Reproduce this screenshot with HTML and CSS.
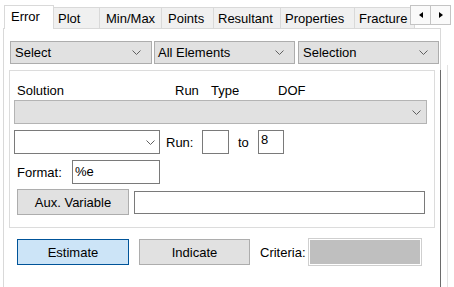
FILE: index.html
```html
<!DOCTYPE html>
<html>
<head>
<meta charset="utf-8">
<link rel="stylesheet" href="styles.css">
</head>
<body>
<div class="window">
  <div class="tabstrip">
    <div class="tab sel t-error">Error</div>
    <div class="tab t-plot">Plot</div>
    <div class="tab t-minmax">Min/Max</div>
    <div class="tab t-points">Points</div>
    <div class="tab t-result">Resultant</div>
    <div class="tab t-props">Properties</div>
    <div class="tab t-frac">Fracture</div>
    <div class="spin">
      <div class="spin-btn"><span class="tri tri-left"></span></div>
      <div class="spin-btn"><span class="tri tri-right"></span></div>
    </div>
  </div>
  <div class="body">
    <div class="panel">
      <div class="row1">
        <div class="dd w1"><span>Select</span><svg class="chev" width="9" height="5" viewBox="0 0 9 5"><polyline points="0.5,0.5 4.5,4.5 8.5,0.5"/></svg></div>
        <div class="dd w2"><span>All Elements</span><svg class="chev" width="9" height="5" viewBox="0 0 9 5"><polyline points="0.5,0.5 4.5,4.5 8.5,0.5"/></svg></div>
        <div class="dd w3"><span>Selection</span><svg class="chev" width="9" height="5" viewBox="0 0 9 5"><polyline points="0.5,0.5 4.5,4.5 8.5,0.5"/></svg></div>
      </div>
      <div class="group">
        <div class="labels">
          <span class="l-sol">Solution</span>
          <span class="l-run">Run</span>
          <span class="l-type">Type</span>
          <span>DOF</span>
        </div>
        <div class="solbar"><svg class="chev" width="9" height="5" viewBox="0 0 9 5"><polyline points="0.5,0.5 4.5,4.5 8.5,0.5"/></svg></div>
        <div class="row3">
          <div class="combo"><svg class="chev" width="9" height="5" viewBox="0 0 9 5"><polyline points="0.5,0.5 4.5,4.5 8.5,0.5"/></svg></div>
          <span class="lbl-run">Run:</span>
          <div class="box box-run"></div>
          <span class="lbl-to">to</span>
          <div class="box box-to">8</div>
        </div>
        <div class="row4">
          <span class="lbl-format">Format:</span>
          <div class="box box-format">%e</div>
        </div>
        <div class="row5">
          <div class="btn btn-aux">Aux. Variable</div>
          <div class="box box-aux"></div>
        </div>
      </div>
      <div class="row6">
        <div class="btn btn-est">Estimate</div>
        <div class="btn btn-ind">Indicate</div>
        <span class="lbl-crit">Criteria:</span>
        <div class="crit"></div>
      </div>
    </div>
    <div class="edge"></div>
  </div>
</div>
</body>
</html>
```
FILE: styles.css
```css
html, body {
  margin: 0;
  padding: 0;
  background: #fff;
}
.window {
  width: 454px;
  height: 287px;
  overflow: hidden;
  position: relative;
  background: #fff;
  font-family: "Liberation Sans", Arial, sans-serif;
  font-size: 13px;
  line-height: 15px;
  color: #000;
}
.tabstrip {
  display: flex;
  align-items: flex-end;
  height: 28px;
  padding-left: 4px;
  position: relative;
  z-index: 1;
}
.tab {
  flex: none;
  box-sizing: border-box;
  height: 21px;
  border-top: 1px solid #d9d9d9;
  border-right: 1px solid #d9d9d9;
  background: #f0f0f0;
  padding: 3px 0 0 5px;
  white-space: nowrap;
  overflow: hidden;
}
.tab.sel {
  height: 24px;
  margin-bottom: -1px;
  background: #fff;
  border-left: 1px solid #d9d9d9;
  padding: 3px 0 0 6px;
}
.t-error { width: 50px; }
.t-plot { width: 46px; padding-left: 4px; }
.t-minmax { width: 62px; padding-left: 6px; }
.t-points { width: 52px; padding-left: 6px; }
.t-result { width: 67px; padding-left: 4px; }
.t-props { width: 74px; padding-left: 4px; }
.t-frac { width: 60px; padding-left: 4px; }
.spin {
  position: absolute;
  left: 410px;
  top: 5px;
  display: flex;
  height: 18px;
  border: 1px solid #c4c4c4;
  background: #fafafa;
}
.spin-btn {
  width: 19px;
  display: flex;
  align-items: center;
  justify-content: center;
}
.spin-btn + .spin-btn {
  border-left: 1px solid #c4c4c4;
}
.tri {
  width: 0;
  height: 0;
  border-top: 3.5px solid transparent;
  border-bottom: 3.5px solid transparent;
}
.tri-left { border-right: 4px solid #000; }
.tri-right { border-left: 4px solid #000; }

.body {
  display: flex;
  height: 259px;
}
.panel {
  box-sizing: border-box;
  width: 437px;
  margin-left: 3px;
  border-left: 1px solid #d9d9d9;
  border-top: 1px solid #d9d9d9;
  padding: 12px 0 0 5px;
}
.edge {
  width: 8px;
  background:
    linear-gradient(#d9d9d9, #d9d9d9) 0 0 / 1px 42px no-repeat,
    linear-gradient(#6b6b6b, #6b6b6b) 0 42px / 1px 100% no-repeat,
    linear-gradient(#e3e3e3, #e3e3e3) 7px 37px / 1px 100% no-repeat;
}
.chev {
  flex: none;
  fill: none;
  stroke: #606060;
  stroke-width: 1;
}
.row1 {
  display: flex;
  margin-left: 1px;
  height: 23px;
}
.dd {
  box-sizing: border-box;
  height: 23px;
  border: 1px solid #adadad;
  background: #e1e1e1;
  display: flex;
  align-items: center;
  justify-content: space-between;
  padding: 0 10px 0 4px;
}
.w1 { width: 142px; }
.w2 { width: 141px; margin-left: 2px; padding-left: 3px; }
.w3 { width: 141px; margin-left: 3px; }

.group {
  box-sizing: border-box;
  width: 426px;
  height: 158px;
  margin-top: 6px;
  border: 1px solid #dcdcdc;
  padding: 12px 0 0 4px;
}
.labels {
  display: flex;
  margin-left: 3px;
  height: 15px;
}
.l-sol { width: 158px; }
.l-run { width: 36px; }
.l-type { width: 67px; }
.solbar {
  box-sizing: border-box;
  width: 413px;
  height: 24px;
  margin-top: 2px;
  border: 1px solid #b4b4b4;
  background: #e1e1e1;
  display: flex;
  align-items: center;
  justify-content: flex-end;
  padding-right: 5px;
}
.row3 {
  display: flex;
  align-items: center;
  height: 24px;
  margin-top: 6px;
}
.combo {
  box-sizing: border-box;
  width: 146px;
  height: 24px;
  border: 1px solid #7a7a7a;
  background: #fff;
  display: flex;
  align-items: center;
  justify-content: flex-end;
  padding-right: 4px;
}
.box {
  box-sizing: border-box;
  height: 24px;
  border: 1px solid #7a7a7a;
  background: #fff;
  padding: 1px 0 0 2px;
}
.lbl-run { width: 36px; margin-left: 6px; }
.box-run { width: 27px; }
.lbl-to { width: 20px; margin-left: 9px; }
.box-to { width: 26px; }
.row4 {
  display: flex;
  align-items: center;
  height: 24px;
  margin-top: 6px;
}
.lbl-format { width: 55px; margin-left: 3px; }
.box-format { width: 88px; padding-top: 3px; }
.row5 {
  display: flex;
  align-items: center;
  height: 26px;
  margin-top: 5px;
}
.btn {
  box-sizing: border-box;
  height: 26px;
  border: 1px solid #adadad;
  background: #e1e1e1;
  display: flex;
  align-items: center;
  justify-content: center;
}
.btn-aux { width: 112px; margin-left: 3px; }
.box-aux { width: 291px; height: 23px; margin-left: 5px; }
.row6 {
  display: flex;
  align-items: center;
  height: 28px;
  margin-top: 10px;
  margin-left: 8px;
}
.btn-est {
  width: 112px;
  background: #cce4f7;
  border-color: #005499;
}
.btn-ind { width: 111px; margin-left: 10px; }
.lbl-crit { width: 48px; margin-left: 10px; }
.crit {
  box-sizing: border-box;
  width: 114px;
  height: 28px;
  border: 1px solid #cfcfcf;
  background: #bfbfbf;
  box-shadow: inset 0 0 0 1px #fff;
}
```
